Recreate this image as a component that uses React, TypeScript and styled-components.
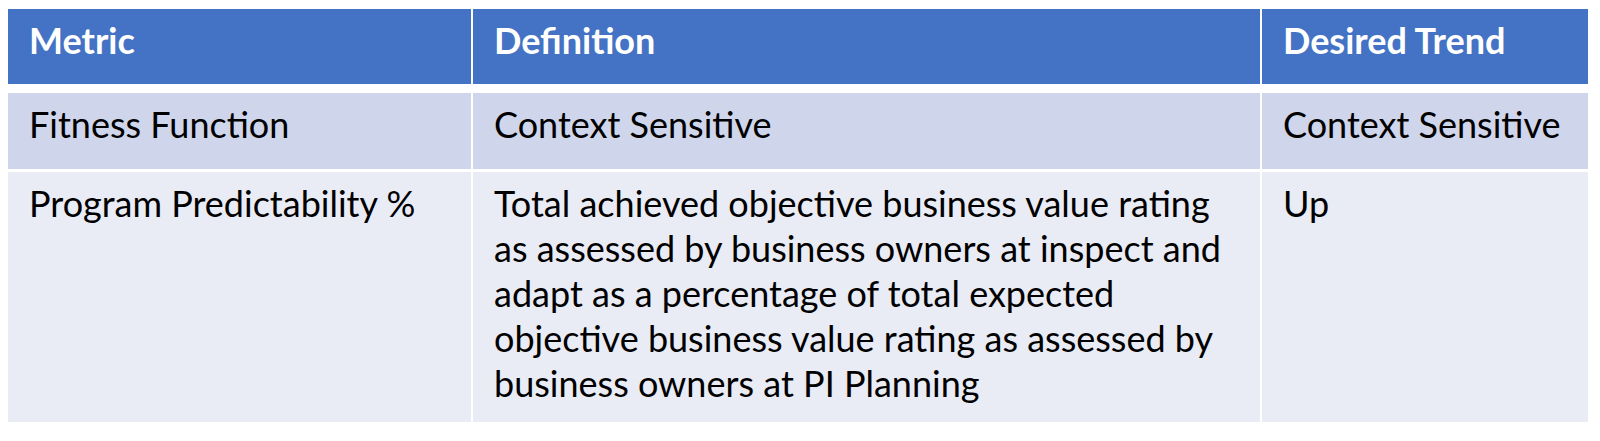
import React from 'react';
import styled, { createGlobalStyle } from 'styled-components';

const Colors = {
    header: '#4472c4',
    bandDark: '#cfd5ea',
    bandLight: '#e9ebf5',
    white: '#ffffff',
    text: '#000000',
};

const GlobalStyle = createGlobalStyle`
    html, body {
        margin: 0;
        padding: 0;
        background: ${Colors.white};
    }
    body {
        font-family: 'Lato', 'Open Sans', sans-serif;
    }
`;

const Page = styled.div`
    padding: 9px 0 0 8px;
`;

const Table = styled.div`
    width: 1580px;
    display: flex;
    flex-direction: column;
`;

const Row = styled.div<{ gapBelow: number }>`
    display: grid;
    grid-template-columns: 463px 787px 326px;
    column-gap: 2px;
    margin-bottom: ${(props) => props.gapBelow}px;
    background: ${Colors.white};
`;

const Cell = styled.div<{ background: string; minHeight: number }>`
    background: ${(props) => props.background};
    min-height: ${(props) => props.minHeight}px;
    box-sizing: border-box;
    padding: 9px 12px 0 21px;
    font-size: 36px;
    line-height: 45px;
    color: ${Colors.text};
`;

const HeaderCell = styled(Cell)`
    color: ${Colors.white};
    font-weight: 700;
`;

const columns = ['Metric', 'Definition', 'Desired Trend'];

const rows = [
    {
        metric: 'Fitness Function',
        definition: 'Context Sensitive',
        trend: 'Context Sensitive',
        background: Colors.bandDark,
        height: 76,
    },
    {
        metric: 'Program Predictability %',
        definition:
            'Total achieved objective business value rating as assessed by business owners at inspect and adapt as a percentage of total expected objective business value rating as assessed by business owners at PI Planning',
        trend: 'Up',
        background: Colors.bandLight,
        height: 250,
    },
];

const App = () => {
    return (
        <Page>
            <GlobalStyle />
            <Table>
                <Row gapBelow={9}>
                    {columns.map((name) => (
                        <HeaderCell key={name} background={Colors.header} minHeight={75}>
                            {name}
                        </HeaderCell>
                    ))}
                </Row>
                {rows.map((row, i) => (
                    <Row key={row.metric} gapBelow={i < rows.length - 1 ? 3 : 0}>
                        <Cell background={row.background} minHeight={row.height}>
                            {row.metric}
                        </Cell>
                        <Cell background={row.background} minHeight={row.height}>
                            {row.definition}
                        </Cell>
                        <Cell background={row.background} minHeight={row.height}>
                            {row.trend}
                        </Cell>
                    </Row>
                ))}
            </Table>
        </Page>
    );
};

export default App;
